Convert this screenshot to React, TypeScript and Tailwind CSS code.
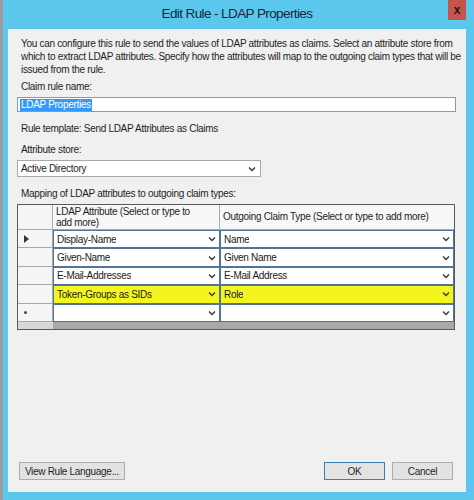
import React from "react";

const FONT = { fontFamily: '"Liberation Sans",Arial,sans-serif' };

function Chevron() {
  return (
    <svg width="8" height="6" viewBox="0 0 8 6" className="shrink-0">
      <path d="M1 1.5 L4 4.5 L7 1.5" fill="none" stroke="#333" strokeWidth="1.3" />
    </svg>
  );
}

function ComboCell({ text, hl }: { text: string; hl?: boolean }) {
  return (
    <div
      className={`flex h-[18.4px] items-center justify-between border border-[#52739a] pl-[3px] pr-[3px] text-[#1a1a1a] ${
        hl ? "bg-[#f4f51e]" : "bg-white"
      }`}
    >
      <span className="truncate">{text}</span>
      <Chevron />
    </div>
  );
}

function RowHead({ mark }: { mark?: "arrow" | "star" }) {
  return (
    <div className="flex h-[18.4px] items-center border-b border-r border-[#a9a9a9] bg-[#f5f5f5] pl-[6px]">
      {mark === "arrow" && (
        <svg width="5" height="8" viewBox="0 0 5 8">
          <path d="M0 0 L5 4 L0 8 Z" fill="#333" />
        </svg>
      )}
      {mark === "star" && <div className="h-[3px] w-[3px] rounded-full bg-[#444]" />}
    </div>
  );
}

export default function App() {
  const rows: { a: string; b: string; mark?: "arrow" | "star"; hl?: boolean }[] = [
    { a: "Display-Name", b: "Name", mark: "arrow" },
    { a: "Given-Name", b: "Given Name" },
    { a: "E-Mail-Addresses", b: "E-Mail Address" },
    { a: "Token-Groups as SIDs", b: "Role", hl: true },
    { a: "", b: "", mark: "star" },
  ];
  return (
    <div className="flex h-[500px] w-[474px] overflow-hidden bg-[#5bc7ec]" style={FONT}>
      <div className="w-[3px] shrink-0 bg-[#9c9c9c]" />
      <div className="relative flex flex-1 flex-col">
        <div className="flex h-[29px] shrink-0 items-center justify-center pr-[3px] text-[13.5px] tracking-[-0.6px] text-[#17283a]">
          Edit Rule - LDAP Properties
        </div>
        <div className="absolute right-[8px] top-0 flex h-[20px] w-[18px] items-center justify-center bg-[#c6534c] text-[12px] font-bold text-[#1a1a1a]">
          x
        </div>
        <div className="ml-[5px] flex h-[463px] w-[458px] flex-col bg-[#f0f0f0] pl-[9px] pt-[8px] pb-[12px] text-[10px] leading-[13px] tracking-[-0.3px] whitespace-nowrap text-[#1e1e1e]">
          <div className="pl-[4px]">
            You can configure this rule to send the values of LDAP attributes as claims. Select an attribute store from
            <br />
            which to extract LDAP attributes. Specify how the attributes will map to the outgoing claim types that will be
            <br />
            issued from the rule.
          </div>
          <div className="mt-[4px] pl-[4px]">Claim rule name:</div>
          <div className="mt-[4px] flex h-[15px] w-[439px] items-center border border-[#7a9cc6] bg-white pl-[2px]">
            <span className="bg-[#3399ff] px-[1px] leading-[12px] text-white">LDAP Properties</span>
          </div>
          <div className="mt-[10px] pl-[4px]">Rule template: Send LDAP Attributes as Claims</div>
          <div className="mt-[8px] pl-[4px]">Attribute store:</div>
          <div className="mt-[4px] flex h-[17px] w-[244px] items-center justify-between border border-[#a8a8a8] bg-white pl-[3px] pr-[4px]">
            <span>Active Directory</span>
            <Chevron />
          </div>
          <div className="mt-[10px] pl-[4px]">Mapping of LDAP attributes to outgoing claim types:</div>
          <div className="mt-[4px] w-[438px] border border-[#5a5a5a] bg-[#a8a8a8]">
            <div className="grid grid-cols-[35px_167px_1fr]">
              <div className="h-[25px] border-b border-r border-[#a9a9a9] bg-[#f5f5f5]" />
              <div className="h-[25px] border-b border-r border-[#a9a9a9] bg-[#f7f7f7] px-[3px] pt-[1px] leading-[11px]">
                LDAP Attribute (Select or type to
                <br />
                add more)
              </div>
              <div className="h-[25px] border-b border-[#a9a9a9] bg-[#f7f7f7] px-[3px] pt-[6px] leading-[11px]">
                Outgoing Claim Type (Select or type to add more)
              </div>
              {rows.map((r, i) => (
                <React.Fragment key={i}>
                  <RowHead mark={r.mark} />
                  <ComboCell text={r.a} hl={r.hl} />
                  <ComboCell text={r.b} hl={r.hl} />
                </React.Fragment>
              ))}
              <div className="h-[7px] bg-[#d8d8d8]" />
              <div className="col-span-2 h-[7px] bg-[#a8a8a8]" />
            </div>
          </div>
          <div className="mt-auto flex items-end pr-[13px]">
            <div className="ml-[2px] flex h-[18px] w-[106px] items-center justify-center border border-[#adadad] bg-[#e2e2e2]">
              View Rule Language...
            </div>
            <div className="flex-1" />
            <div className="flex h-[18px] w-[61px] items-center justify-center border border-[#3c7fb1] bg-[#e3e3e3]">
              OK
            </div>
            <div className="ml-[7px] flex h-[18px] w-[61px] items-center justify-center border border-[#adadad] bg-[#e2e2e2]">
              Cancel
            </div>
          </div>
        </div>
      </div>
    </div>
  );
}
